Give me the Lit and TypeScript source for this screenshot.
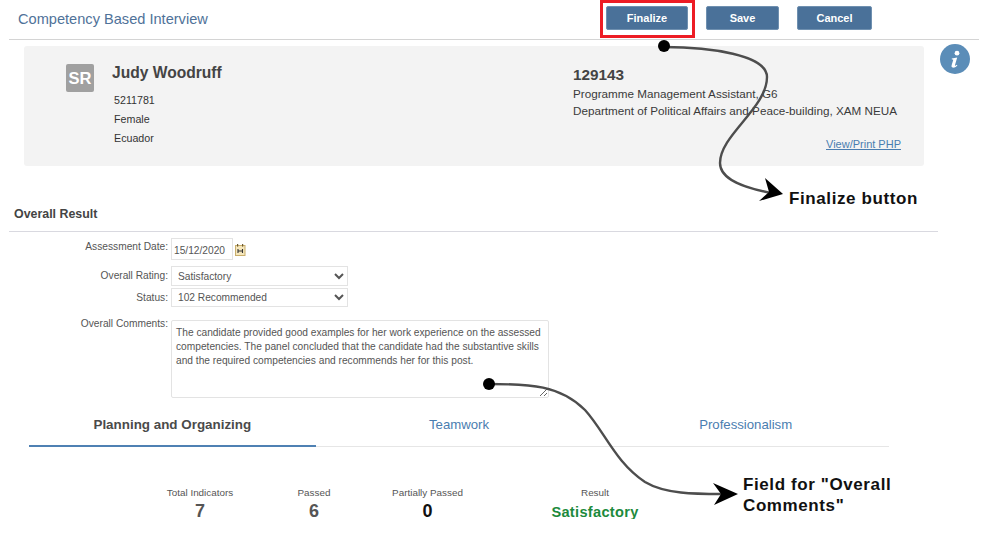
import { LitElement, html, css, svg } from "lit";
import { customElement } from "lit/decorators.js";

@customElement("app-root")
export class AppRoot extends LitElement {
  static styles = css`
    :host {
      display: block;
      position: relative;
      width: 1000px;
      height: 549px;
      overflow: hidden;
      background: #fff;
      font-family: "Liberation Sans", Arial, sans-serif;
      color: #333;
    }
    .header {
      display: flex;
      align-items: flex-start;
      justify-content: space-between;
      height: 39px;
      width: 970px;
      margin-left: 9px;
      border-bottom: 1px solid #d4d4d4;
    }
    .title {
      margin: 11px 0 0 9px;
      font-size: 14.6px;
      line-height: 17px;
      color: #4f7299;
    }
    .actions {
      display: flex;
      align-items: flex-start;
      margin-right: 107px;
    }
    .hilite {
      display: flex;
      box-sizing: border-box;
      height: 38px;
      width: 95px;
      padding: 3px 4px 5px 3px;
      border: 3px solid #ed1c24;
      margin-right: 11px;
    }
    button {
      height: 24px;
      padding: 0;
      box-sizing: border-box;
      background: #4a7199;
      border: 1px solid #6f90b0;
      border-radius: 2px;
      color: #fff;
      font: bold 11px "Liberation Sans", Arial, sans-serif;
    }
    .b-fin { width: 82px; }
    .b-save { width: 73px; margin: 6px 18px 0 0; }
    .b-can { width: 75px; margin-top: 6px; }

    .card {
      display: flex;
      box-sizing: border-box;
      width: 900px;
      height: 120px;
      margin: 6px 0 0 24px;
      padding: 18px 23px 0 42px;
      background: #f3f3f3;
      border-radius: 3px;
    }
    .person { display: flex; width: 507px; flex: none; }
    .tile {
      width: 28px;
      height: 28px;
      border-radius: 2px;
      background: #a0a0a0;
      color: #fff;
      font-weight: bold;
      font-size: 16.5px;
      line-height: 28px;
      text-align: center;
    }
    .who { margin-left: 18px; }
    .name { font-size: 15.6px; line-height: 18px; font-weight: bold; color: #444; }
    .facts { margin: 9px 0 0 2px; font-size: 10.7px; line-height: 19px; color: #333; }
    .post { flex: 1; display: flex; flex-direction: column; }
    .num { margin-top: 2px; font-size: 15.3px; line-height: 18px; font-weight: bold; color: #444; }
    .lines { margin-top: 0.5px; font-size: 11.7px; line-height: 17px; color: #3a3a3a; white-space: nowrap; }
    .link {
      align-self: flex-end;
      margin-top: 18.5px;
      font-size: 11px;
      line-height: 14px;
      color: #4a7db0;
      text-decoration: underline;
    }

    .section {
      box-sizing: border-box;
      width: 929px;
      margin: 40px 0 0 9px;
      padding: 0 0 9px 5px;
      border-bottom: 1px solid #d9d9e0;
      font-size: 12.4px;
      line-height: 16px;
      font-weight: bold;
      color: #444;
    }
    .form {
      display: grid;
      grid-template-columns: 159px auto;
      column-gap: 3px;
      justify-content: start;
      margin: 6px 0 0 9px;
      font-size: 10.2px;
      color: #555;
    }
    .lab { text-align: right; line-height: 14px; }
    .l-date { padding-top: 2px; }
    .l-rate { padding-top: 3px; }
    .l-stat { padding-top: 3px; }
    .l-com { margin-top: -3px; }
    .date { display: flex; align-items: flex-start; margin-bottom: 6px; }
    input, select, textarea {
      box-sizing: border-box;
      margin: 0;
      border: 1px solid #e3e3e3;
      background: #fff;
      color: #555;
      font: 10.2px "Liberation Sans", Arial, sans-serif;
      outline: none;
    }
    input { width: 62px; height: 22px; padding: 3px 0 0 2px; }
    .cal { margin: 6px 0 0 2px; }
    select { display: block; width: 177px; padding-left: 2px; }
    .s-rate { height: 20px; margin-bottom: 2px; }
    .s-stat { height: 19px; margin-bottom: 13px; }
    textarea {
      display: block;
      width: 378px;
      height: 78px;
      padding: 5px 4px;
      line-height: 14px;
      border-radius: 2px;
    }

    .tabs {
      display: flex;
      width: 860px;
      margin: 17px 0 0 29px;
      border-bottom: 1px solid #e6e6e6;
    }
    .tab {
      flex: 1;
      box-sizing: border-box;
      height: 31px;
      padding-top: 1px;
      font-size: 13.2px;
      line-height: 18px;
      text-align: center;
      color: #4a7db0;
    }
    .tab.on {
      height: 32px;
      margin-bottom: -1px;
      border-bottom: 2px solid #4f81b3;
      font-weight: bold;
      font-size: 13.4px;
      color: #4a4a4a;
    }

    .stats {
      display: grid;
      grid-template-columns: 114px 114px 113px 222px;
      margin: 39px 0 0 143px;
      text-align: center;
    }
    .s-lab { font-size: 9.9px; line-height: 14px; color: #555; }
    .s-val { margin-top: 3px; font-size: 18px; line-height: 16px; font-weight: bold; color: #555; }
    .s-val.k { color: #111; }
    .s-val.g {
      height: 14px;
      overflow: hidden;
      margin-top: 5px;
      font-size: 14.6px;
      line-height: 14px;
      letter-spacing: 0.3px;
      color: #1c8a3c;
    }

    .info { position: absolute; left: 940px; top: 44px; }
    .marks { position: absolute; left: 0; top: 0; pointer-events: none; }
    .note {
      position: absolute;
      font-size: 17px;
      line-height: 21px;
      font-weight: bold;
      letter-spacing: 0.6px;
      color: #111;
      white-space: nowrap;
    }
    .n1 { left: 789px; top: 188px; }
    .n2 { left: 743px; top: 474px; }
  `;

  private marks() {
    return svg`
      <path d="M664 47 C 710 47 767 55 767 77 C 767 108 720 135 720 163 C 720 180 745 188 771 193"
        fill="none" stroke="#4d4d4d" stroke-width="2.4"/>
      <circle cx="664" cy="46" r="6" fill="#000"/>
      <path d="M783 194 L765 178 L769 192 L759 201 Z" fill="#000"/>
      <path d="M489 384 C 530 384 560 385 585 410 C 605 432 615 462 645 482 C 665 494 695 494 722 494"
        fill="none" stroke="#4d4d4d" stroke-width="2.4"/>
      <circle cx="489" cy="384" r="6" fill="#000"/>
      <path d="M738 494 L713 483 L721 494 L714 505 Z" fill="#000"/>
    `;
  }

  render() {
    return html`
      <div class="header">
        <div class="title">Competency Based Interview</div>
        <div class="actions">
          <div class="hilite"><button class="b-fin">Finalize</button></div>
          <button class="b-save">Save</button>
          <button class="b-can">Cancel</button>
        </div>
      </div>

      <div class="card">
        <div class="person">
          <div class="tile">SR</div>
          <div class="who">
            <div class="name">Judy Woodruff</div>
            <div class="facts">5211781<br />Female<br />Ecuador</div>
          </div>
        </div>
        <div class="post">
          <div class="num">129143</div>
          <div class="lines">
            Programme Management Assistant, G6<br />
            Department of Political Affairs and Peace-building, XAM NEUA
          </div>
          <a class="link">View/Print PHP</a>
        </div>
      </div>

      <div class="section">Overall Result</div>

      <div class="form">
        <div class="lab l-date">Assessment Date:</div>
        <div class="date">
          <input .value=${"15/12/2020"} />
          <svg class="cal" width="11" height="12" viewBox="0 0 11 12">
            <rect x="0.5" y="1.5" width="9.5" height="10" fill="#f6e7bc" stroke="#c9ae6c" />
            <rect x="2" y="0" width="1.2" height="2.6" fill="#6b5a30" />
            <rect x="7" y="0" width="1.2" height="2.6" fill="#6b5a30" />
            <path d="M3 5v4M7.5 5v4M3 7h4.5" stroke="#333" stroke-width="1.1" fill="none" />
          </svg>
        </div>
        <div class="lab l-rate">Overall Rating:</div>
        <select class="s-rate"><option>Satisfactory</option></select>
        <div class="lab l-stat">Status:</div>
        <select class="s-stat"><option>102 Recommended</option></select>
        <div class="lab l-com">Overall Comments:</div>
        <textarea
          .value=${"The candidate provided good examples for her work experience on the assessed competencies. The panel concluded that the candidate had the substantive skills and the required competencies and recommends her for this post."}
        ></textarea>
      </div>

      <div class="tabs">
        <div class="tab on">Planning and Organizing</div>
        <div class="tab">Teamwork</div>
        <div class="tab">Professionalism</div>
      </div>

      <div class="stats">
        <div><div class="s-lab">Total Indicators</div><div class="s-val">7</div></div>
        <div><div class="s-lab">Passed</div><div class="s-val">6</div></div>
        <div><div class="s-lab">Partially Passed</div><div class="s-val k">0</div></div>
        <div><div class="s-lab">Result</div><div class="s-val g">Satisfactory</div></div>
      </div>

      <svg class="info" width="30" height="30" viewBox="0 0 30 30">
        <circle cx="15" cy="15" r="15" fill="#5b8db8" />
        <circle cx="17" cy="9.2" r="2.4" fill="#fff" />
        <path d="M11.8 14.4 L17.2 13.4 L15 21 C14.8 21.9 15.4 22 16.8 20.8 L17.4 21.4 C15.6 23.2 14 23.8 12.8 23.6 C11.5 23.3 11.3 22.4 11.7 21 L13.3 15.8 L11.7 15.3 Z" fill="#fff" />
      </svg>

      <svg class="marks" width="1000" height="549" viewBox="0 0 1000 549">${this.marks()}</svg>
      <div class="note n1">Finalize button</div>
      <div class="note n2">Field for "Overall<br />Comments"</div>
    `;
  }
}
